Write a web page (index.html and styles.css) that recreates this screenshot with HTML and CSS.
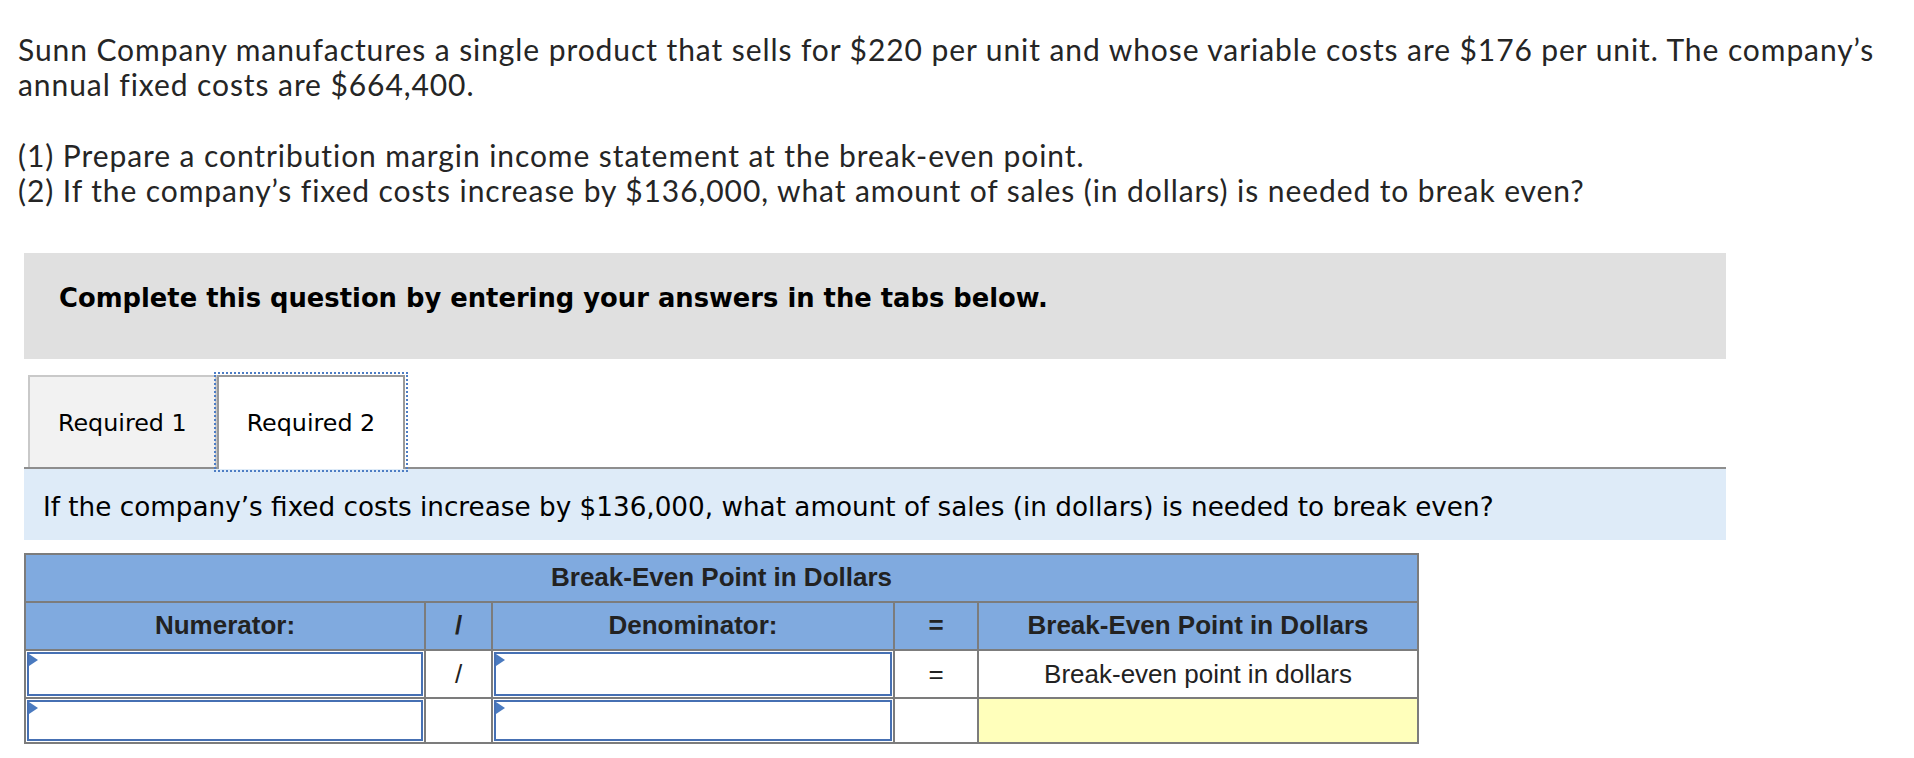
FILE: index.html
```html
<!DOCTYPE html>
<html lang="en">
<head>
<meta charset="utf-8">
<title>Break-even question</title>
<link rel="stylesheet" href="styles.css">
</head>
<body>
<div class="question">
  <p class="para">Sunn Company manufactures a single product that sells for $220 per unit and whose variable costs are $176 per unit. The company’s annual fixed costs are $664,400.</p>
  <p class="para">(1) Prepare a contribution margin income statement at the break-even point.<br>(2) If the company’s fixed costs increase by $136,000, what amount of sales (in dollars) is needed to break even?</p>
</div>

<div class="task">
  <div class="instructions">Complete this question by entering your answers in the tabs below.</div>

  <div class="tabs">
    <div class="tab">Required 1</div>
    <div class="tab active">Required 2</div>
  </div>

  <div class="prompt">If the company’s fixed costs increase by $136,000, what amount of sales (in dollars) is needed to break even?</div>

  <table class="be">
    <colgroup>
      <col class="c-num"><col class="c-op1"><col class="c-den"><col class="c-op2"><col class="c-res">
    </colgroup>
    <tr>
      <th colspan="5">Break-Even Point in Dollars</th>
    </tr>
    <tr>
      <th>Numerator:</th>
      <th>/</th>
      <th>Denominator:</th>
      <th>=</th>
      <th>Break-Even Point in Dollars</th>
    </tr>
    <tr>
      <td class="inp"><div class="field"></div></td>
      <td class="op">/</td>
      <td class="inp"><div class="field"></div></td>
      <td class="op">=</td>
      <td class="label">Break-even point in dollars</td>
    </tr>
    <tr>
      <td class="inp"><div class="field short"></div></td>
      <td class="op"></td>
      <td class="inp"><div class="field short"></div></td>
      <td class="op"></td>
      <td class="answer"></td>
    </tr>
  </table>
</div>
</body>
</html>
```

FILE: styles.css
```css
html, body {
  margin: 0;
  padding: 0;
  background: #ffffff;
}

.question {
  padding: 32px 12px 0 18px;
  font-family: "Lato", "Open Sans", sans-serif;
  font-size: 30px;
  letter-spacing: 0.92px;
  line-height: 35.2px;
  color: #252525;
  font-variant-ligatures: none;
}

.para {
  margin: 0 0 35.2px 0;
}

.para:last-child {
  margin-bottom: 0;
}

.task {
  width: 1702px;
  margin-left: 24px;
}

.instructions {
  margin-top: 45px;
  background: #e0e0e0;
  padding: 30px 35px 46px 35px;
  font-family: "DejaVu Sans", Verdana, sans-serif;
  font-weight: bold;
  font-size: 25.8px;
  color: #000;
}

.tabs {
  display: flex;
  margin-top: 16px;
  padding-left: 4px;
  border-bottom: 2px solid #8e8e8e;
  height: 92px;
  align-items: flex-end;
}

.tab {
  box-sizing: border-box;
  height: 92px;
  padding: 32px 28px 0 28px;
  border: 2px solid #c9c9c9;
  border-bottom: none;
  background: #f2f2f2;
  font-family: "DejaVu Sans", Verdana, sans-serif;
  font-size: 23.8px;
  color: #000;
}

.tab.active {
  height: 94px;
  margin-bottom: -2px;
  background: #ffffff;
  border-color: #9a9a9a;
  outline: 2px dotted #4d7dc4;
  outline-offset: 1px;
}

.prompt {
  background: #deebf8;
  padding: 23px 18px 18px 19px;
  font-family: "DejaVu Sans", Verdana, sans-serif;
  font-size: 26.25px;
  color: #000;
}

.be {
  margin-top: 13px;
  width: 1393px;
  table-layout: fixed;
  border-collapse: collapse;
  font-family: "Liberation Sans", Arial, sans-serif;
  font-size: 26px;
  color: #222;
}

.c-num { width: 400px; }
.c-op1 { width: 67px; }
.c-den { width: 402px; }
.c-op2 { width: 84px; }
.c-res { width: 440px; }

.be th,
.be td {
  border: 2px solid #7c7c7c;
  padding: 0;
  text-align: center;
  vertical-align: middle;
}

.be th {
  background: #80aadf;
  font-weight: bold;
  height: 44px;
  padding-bottom: 2px;
}

.be td {
  background: #ffffff;
}

.be td.answer {
  background: #ffffbb;
}

.field {
  position: relative;
  box-sizing: border-box;
  height: 44px;
  margin: 1px;
  border: 2px solid #4670b3;
  background: #ffffff;
}

.field.short {
  height: 41px;
}

.field::before {
  content: "";
  position: absolute;
  left: 0;
  top: 0;
  border-top: 6px solid transparent;
  border-bottom: 6px solid transparent;
  border-left: 9px solid #4a7abf;
}
```
